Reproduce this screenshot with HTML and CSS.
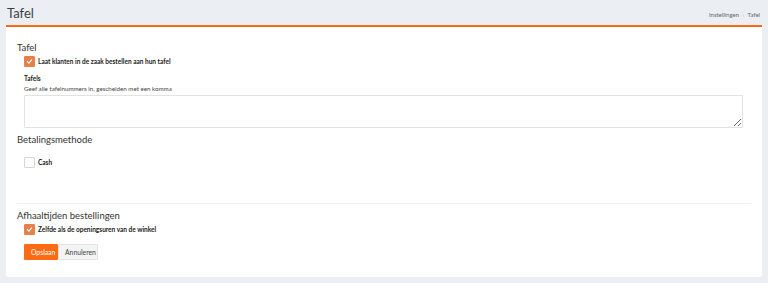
FILE: index.html
```html
<!DOCTYPE html>
<html lang="nl">
<head>
    <meta charset="UTF-8">
    <meta name="viewport" content="width=device-width, initial-scale=1.0">
    <title>Tafel</title>
    <link rel="stylesheet" href="styles.css">
</head>
<body>
    <div class="page-header">
        <h1>Tafel</h1>
        <div class="breadcrumb">
            <span>Instellingen</span>
            <span class="sep">&rsaquo;</span>
            <span>Tafel</span>
        </div>
    </div>

    <div class="panel">
        <h2 class="section-title">Tafel</h2>
        <div class="group">
            <label class="check">
                <span class="box checked">
                    <svg viewBox="0 0 10 10" width="7" height="7"><path d="M2 5.2 L4.1 7.2 L8 2.8" fill="none" stroke="#fff" stroke-width="1.6" stroke-linecap="round" stroke-linejoin="round"/></svg>
                </span>
                <span class="check-label">Laat klanten in de zaak bestellen aan hun tafel</span>
            </label>
            <div class="field-label">Tafels</div>
            <div class="help">Geef alle tafelnummers in, gescheiden met een komma</div>
            <textarea class="input"></textarea>
        </div>

        <h2 class="section-title">Betalingsmethode</h2>
        <div class="group group-pay">
            <label class="check">
                <span class="box"></span>
                <span class="check-label">Cash</span>
            </label>
        </div>

        <hr class="divider">

        <h2 class="section-title">Afhaaltijden bestellingen</h2>
        <div class="group">
            <label class="check">
                <span class="box checked">
                    <svg viewBox="0 0 10 10" width="7" height="7"><path d="M2 5.2 L4.1 7.2 L8 2.8" fill="none" stroke="#fff" stroke-width="1.6" stroke-linecap="round" stroke-linejoin="round"/></svg>
                </span>
                <span class="check-label">Zelfde als de openingsuren van de winkel</span>
            </label>
            <div class="actions">
                <button class="btn btn-primary">Opslaan</button>
                <button class="btn btn-default">Annuleren</button>
            </div>
        </div>
    </div>
</body>
</html>
```

FILE: styles.css
```css
body {
    margin: 0;
    padding: 0 6px;
    background: #ebeef3;
    font-family: "Source Sans Pro", "Lato", sans-serif;
    color: #333;
}
.page-header {
    display: flex;
    align-items: center;
    justify-content: space-between;
    height: 25px;
}
.page-header h1 {
    margin: 0 0 0 1px;
    font-size: 13px;
    font-weight: 400;
    color: #3a3f44;
}
.breadcrumb {
    font-size: 6px;
    color: #666;
    margin-right: 2px;
    margin-top: 3px;
}
.breadcrumb .sep {
    color: #bbb;
    margin: 0 2px;
}
.panel {
    background: #fff;
    border-top: 2px solid #ff6a13;
    border-radius: 0 0 2px 2px;
    padding: 14px 11px 17px;
}
.section-title {
    margin: 0;
    font-size: 9.5px;
    font-weight: 400;
    color: #333;
    line-height: 14px;
}
.group {
    padding: 0 8px 0 7px;
}
.check {
    display: flex;
    align-items: center;
    height: 11px;
    margin-top: 1px;
}
.box {
    width: 11px;
    height: 11px;
    box-sizing: border-box;
    border: 1px solid #d5d5d5;
    border-radius: 1px;
    background: #fff;
    display: flex;
    align-items: center;
    justify-content: center;
    margin-right: 3px;
}
.box.checked {
    background: #e7804a;
    border-color: #e7804a;
}
.check-label {
    font-size: 6.5px;
    font-weight: 700;
    color: #222;
}
.field-label {
    font-size: 6.5px;
    font-weight: 700;
    color: #222;
    margin-top: 7px;
    line-height: 10px;
}
.help {
    font-size: 6.2px;
    color: #444;
    line-height: 10px;
}
.input {
    display: block;
    width: 100%;
    height: 33px;
    box-sizing: border-box;
    border: 1px solid #e2e2e2;
    border-radius: 1px;
    margin: 1px 0 5px;
    resize: vertical;
}
.group-pay {
    padding-top: 9px;
    padding-bottom: 35px;
}
.divider {
    border: none;
    border-top: 1px solid #f0f0f0;
    margin: 0 0 5px;
}
.actions {
    display: flex;
    margin-top: 9px;
}
.btn {
    font-family: inherit;
    font-size: 6.8px;
    height: 16px;
    padding: 0 6px;
    border-radius: 1px;
    cursor: pointer;
}
.btn-primary {
    background: #ff6a13;
    border: 1px solid #ff6a13;
    color: #fff;
    width: 34px;
}
.btn-default {
    background: #f4f4f4;
    border: 1px solid #e4e4e4;
    color: #444;
    width: 40px;
}
```
